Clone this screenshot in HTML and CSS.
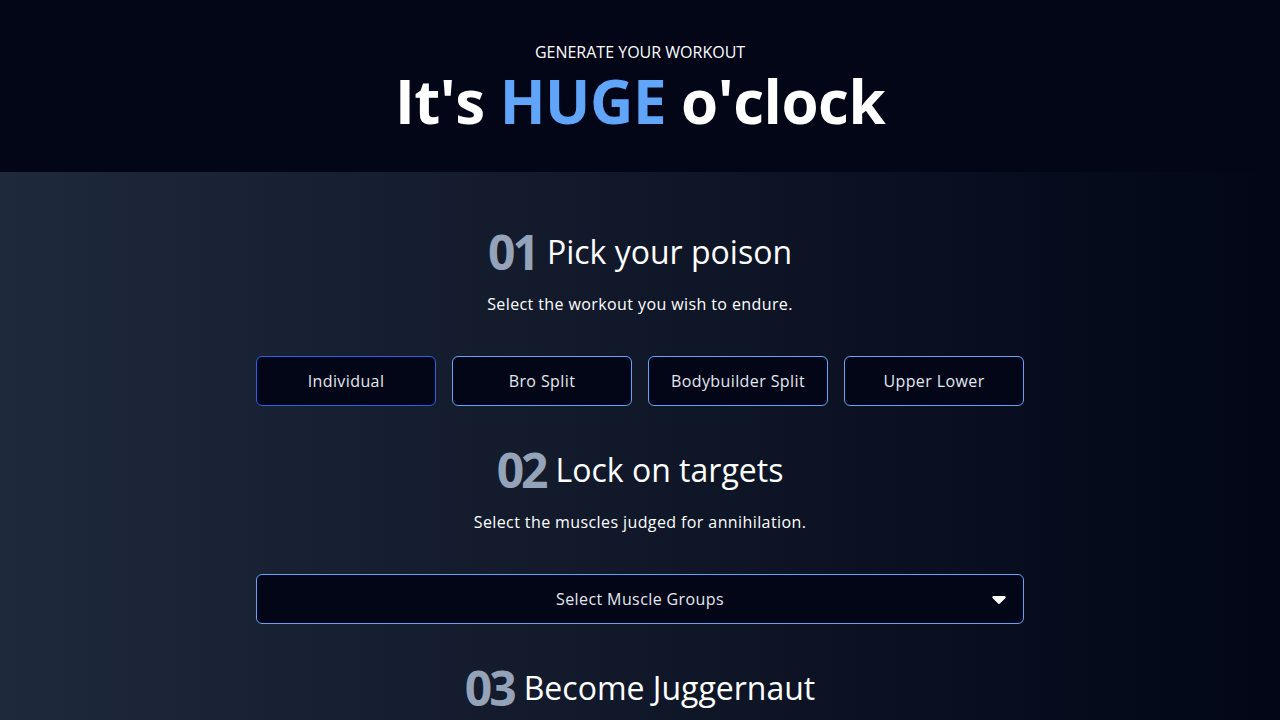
FILE: index.html
```html
<!DOCTYPE html>
<html lang="en">
<head>
    <meta charset="UTF-8">
    <meta name="viewport" content="width=device-width, initial-scale=1.0">
    <title>Swoley Fit</title>
    <link rel="stylesheet" href="styles.css">
</head>
<body>
    <header class="hero">
        <p class="hero-sub">GENERATE YOUR WORKOUT</p>
        <h1 class="hero-title">It's <span class="accent">HUGE</span> o'clock</h1>
    </header>

    <main class="generator">
        <!-- 01 -->
        <div class="step">
            <h2 class="step-header"><span class="step-num">01</span><span>Pick your poison</span></h2>
            <p class="step-desc">Select the workout you wish to endure.</p>
        </div>
        <div class="poison-list">
            <button class="poison-btn active">Individual</button>
            <button class="poison-btn">Bro Split</button>
            <button class="poison-btn">Bodybuilder Split</button>
            <button class="poison-btn">Upper Lower</button>
        </div>

        <!-- 02 -->
        <div class="step">
            <h2 class="step-header"><span class="step-num">02</span><span>Lock on targets</span></h2>
            <p class="step-desc">Select the muscles judged for annihilation.</p>
        </div>
        <button class="muscle-select">
            <span>Select Muscle Groups</span>
            <svg class="caret" viewBox="0 192 320 192" width="14" height="8"><path fill="currentColor" d="M137.4 374.6c12.5 12.5 32.8 12.5 45.3 0l128-128c9.2-9.2 11.900-22.9 6.9-34.9S301 192 288 192H32c-12.9 0-24.6 7.8-29.6 19.8s-2.2 25.7 6.9 34.9l128 128z"/></svg>
        </button>

        <!-- 03 -->
        <div class="step">
            <h2 class="step-header"><span class="step-num">03</span><span>Become Juggernaut</span></h2>
        </div>
    </main>
</body>
</html>
```

FILE: styles.css
```css
* {
    box-sizing: border-box;
}

body {
    margin: 0;
    font-family: 'Open Sans', 'Noto Sans', sans-serif;
    color: #fff;
    background: #020617;
    min-height: 100vh;
}

.hero {
    background: #020617;
    text-align: center;
    padding: 40px 16px 41px;
}

.hero-sub {
    margin: 0;
    font-size: 16px;
    line-height: 24px;
    font-weight: 500;
}

.hero-title {
    margin: 7px 0 0;
    font-size: 60px;
    line-height: 60px;
    font-weight: 700;
    letter-spacing: -0.5px;
}

.accent {
    color: #60a5fa;
}

.generator {
    background: linear-gradient(to right, #1e293b, #020617);
    min-height: 548px;
    padding: 56px 16px 40px;
    display: flex;
    flex-direction: column;
    align-items: center;
    gap: 40px;
}

.step {
    display: flex;
    flex-direction: column;
    align-items: center;
    gap: 16px;
}

.step-header {
    margin: 0;
    display: flex;
    align-items: center;
    gap: 10px;
    font-size: 32px;
    line-height: 48px;
    font-weight: 400;
}

.step-num {
    font-size: 48px;
    font-weight: 700;
    letter-spacing: -3px;
    color: #94a3b8;
}

.step-desc {
    margin: 0;
    font-size: 16px;
    line-height: 24px;
    letter-spacing: 0.4px;
}

.poison-list {
    width: 768px;
    display: grid;
    grid-template-columns: repeat(4, 1fr);
    gap: 16px;
}

.poison-btn,
.muscle-select {
    height: 50px;
    background: #020617;
    border: 1px solid #60a5fa;
    border-radius: 6px;
    color: #e2e8f0;
    font-family: inherit;
    font-size: 16px;
    letter-spacing: 0.4px;
    cursor: pointer;
}

.poison-btn.active {
    border-color: #2563eb;
}

.muscle-select {
    position: relative;
    width: 768px;
    display: flex;
    align-items: center;
    justify-content: center;
}

.caret {
    position: absolute;
    right: 17px;
    top: 21px;
    color: #fff;
}
```
